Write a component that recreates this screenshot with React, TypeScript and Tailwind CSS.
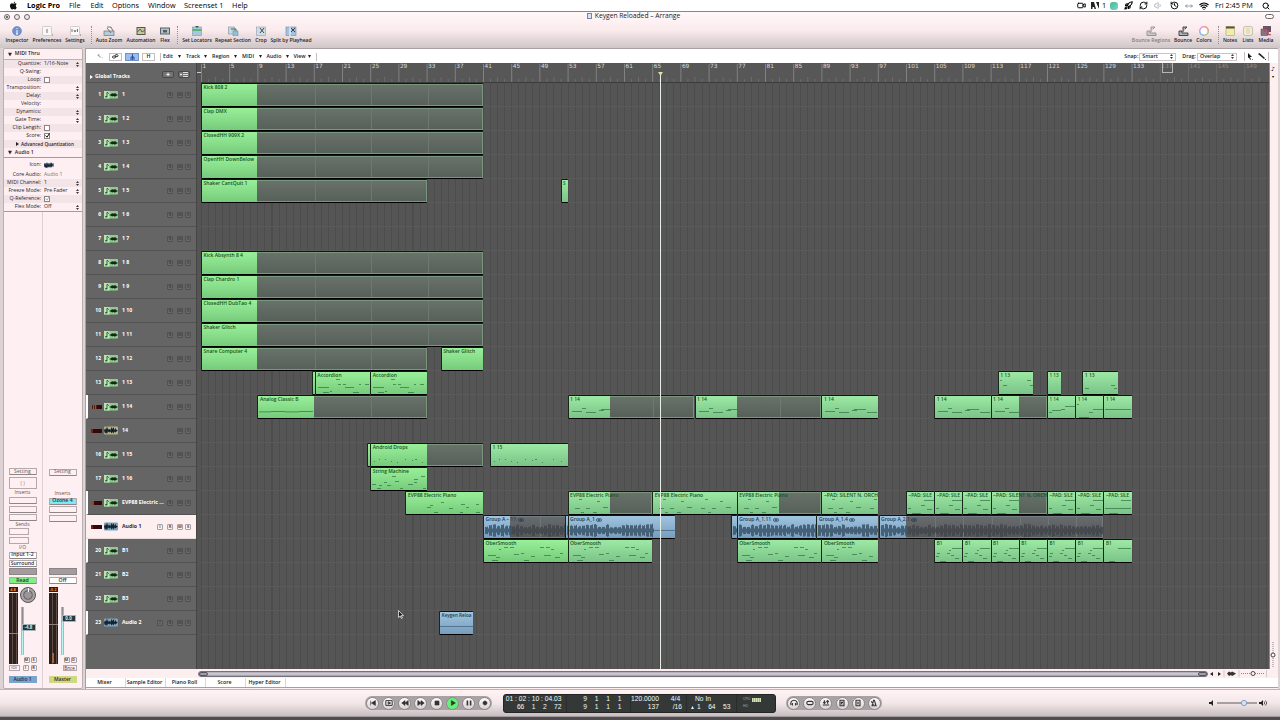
import type { ReactNode } from "react";
import {
  Search,
  Wifi,
  History,
  RefreshCw,
  Volume1,
  Video,
  Rocket,
  MoveHorizontal,
} from "lucide-react";

const BAR = 7.05;
const TRACK_H = 24;

type Note = [number, number, number];

type Region = {
  from: number;
  to: number;
  loop?: number;
  name?: string;
  audio?: boolean;
  stereo?: boolean;
  notes?: Note[];
  waveTo?: number;
};

type Track = {
  n?: number;
  name: string;
  kind?: "midi" | "audio" | "bus";
  meter?: "low" | "mid" | "high";
  edge?: boolean;
  selected?: boolean;
  regions?: Region[];
};

const accordion: Note[] = [[20, 7, 4], [22, 12, 3], [27, 12, 3], [2, 15, 11], [29, 15, 9], [43, 12, 2], [49, 12, 4], [7, 20, 6], [37, 20, 6], [14, 19, 2]];
const oct: Note[] = [[20, 7, 4], [26, 7, 4], [15, 9, 2], [4, 15, 8], [30, 14, 5], [37, 13, 3], [12, 17, 4], [47, 16, 4], [8, 20, 6], [40, 20, 5], [56, 7, 4], [62, 7, 4], [67, 9, 3], [60, 15, 7], [71, 17, 5], [76, 13, 3]];
const drops: Note[] = [[3, 17, 1], [8, 15, 1], [14, 15, 1], [20, 17, 1], [26, 18, 1], [34, 15, 1], [41, 16, 1], [44, 15, 2], [51, 18, 1], [62, 15, 1], [70, 17, 1]];
const strings: Note[] = [[21, 8, 4], [50, 8, 4], [43, 11, 4], [13, 14, 3], [24, 13, 4], [1, 16, 4], [8, 17, 3], [16, 17, 4], [37, 16, 5], [43, 14, 3], [6, 20, 4], [29, 20, 3], [52, 20, 3]];
const piano: Note[] = [[35, 10, 3], [24, 13, 3], [55, 12, 4], [70, 12, 3], [21, 15, 4], [43, 16, 4], [60, 15, 3], [28, 20, 4], [54, 20, 3], [70, 20, 4]];
const evp: Note[] = [[10, 7, 3], [28, 9, 3], [6, 16, 5], [17, 16, 4], [34, 15, 5], [12, 20, 3], [24, 20, 4], [52, 7, 3], [67, 9, 3], [48, 16, 4], [59, 16, 4], [73, 15, 5], [55, 20, 3]];
const lead: Note[] = [[3, 15, 10], [13, 12, 4], [17, 16, 10], [30, 14, 5], [32, 13, 12], [45, 16, 10]];
const pad: Note[] = [[17, 8, 10], [14, 13, 4], [1, 16, 3], [20, 17, 5], [5, 21, 9]];
const b1: Note[] = [[17, 8, 10], [14, 10, 2], [2, 13, 3], [12, 13, 3], [16, 15, 3], [1, 16, 3], [20, 18, 4], [5, 21, 6]];
const sparse: Note[] = [[1, 8, 2], [4, 13, 4], [28, 8, 4], [31, 13, 4]];
const line: Note[] = [[1, 15.5, 12], [13, 15, 14], [27, 15.5, 14], [41, 15, 14]];
const flat: Note[] = [[1, 13, 26]];
const rise: Note[] = [[1, 16, 3], [4, 14, 9], [13, 13, 4], [17, 10, 10]];

const eight = { from: 1, to: 9, loop: 41 };
const PAD_LONG = "~PAD: SILENT N. ORCH";
const PAD_SHORT = "~PAD: SILE";

const TRACKS: Track[] = [
  { n: 1, name: "1", regions: [{ ...eight, name: "Kick 808 2" }] },
  { n: 2, name: "1 2", regions: [{ ...eight, name: "Clap DMX" }] },
  { n: 3, name: "1 3", regions: [{ ...eight, name: "ClosedHH 909X 2" }] },
  { n: 4, name: "1 4", regions: [{ ...eight, name: "OpenHH DownBelow" }] },
  {
    n: 5,
    name: "1 5",
    regions: [
      { ...eight, loop: 33, name: "Shaker CantQuit 1" },
      { from: 52, to: 53, name: "S" },
    ],
  },
  { n: 6, name: "1 6" },
  { n: 7, name: "1 7" },
  { n: 8, name: "1 8", regions: [{ ...eight, name: "Kick Absynth 8 4" }] },
  { n: 9, name: "1 9", regions: [{ ...eight, name: "Clap Chardro 1" }] },
  { n: 10, name: "1 10", regions: [{ ...eight, name: "ClosedHH DubTao 4" }] },
  { n: 11, name: "1 11", regions: [{ ...eight, name: "Shaker Glitch" }] },
  {
    n: 12,
    name: "1 12",
    regions: [
      { ...eight, loop: 33, name: "Snare Computer 4" },
      { from: 35, to: 41, name: "Shaker Glitch" },
    ],
  },
  {
    n: 13,
    name: "1 13",
    regions: [
      { from: 16.75, to: 17.15 },
      { from: 17.15, to: 25, name: "Accordion", notes: accordion },
      { from: 25, to: 33, name: "Accordion", notes: accordion },
      { from: 114, to: 119, name: "1 13", notes: sparse },
      { from: 121, to: 123, name: "1 13" },
      { from: 126, to: 131, name: "1 13", notes: [[2, 16, 4], [28, 13, 4], [31, 16, 3]] },
    ],
  },
  {
    name: "1 14",
    meter: "high",
    edge: true,
    regions: [
      { from: 9, to: 17, loop: 33, name: "Analog Classic B", notes: line },
      { from: 53, to: 59, loop: 71, name: "1 14", notes: lead },
      { from: 71, to: 77, loop: 89, name: "1 14", notes: lead },
      { from: 89, to: 97, name: "1 14", notes: lead },
      { from: 105, to: 113, name: "1 14", notes: lead },
      { from: 113, to: 117, loop: 121, name: "1 14", notes: lead },
      { from: 121, to: 125, name: "1 14", notes: rise },
      { from: 125, to: 129, name: "1 14", notes: [[1, 8, 2], [3, 21, 10], [13, 16, 4], [17, 13, 10]] },
      { from: 129, to: 133, name: "1 14", notes: flat },
    ],
  },
  { name: "14", kind: "bus", meter: "low" },
  {
    n: 16,
    name: "1 15",
    regions: [
      { from: 24.5, to: 25 },
      { from: 25, to: 33, loop: 41, name: "Android Drops", notes: drops },
      { from: 42, to: 53, name: "1 15", notes: drops },
    ],
  },
  { n: 17, name: "1 16", regions: [{ from: 25, to: 33, name: "String Machine", notes: strings }] },
  {
    name: "EVP88 Electric ...",
    meter: "mid",
    edge: true,
    regions: [
      { from: 30, to: 41, name: "EVP88 Electric Piano", notes: piano },
      { from: 53, to: 59, loop: 65, name: "EVP88 Electric Piano", notes: evp },
      { from: 65, to: 77, name: "EVP88 Electric Piano", notes: evp },
      { from: 77, to: 83, loop: 89, name: "EVP88 Electric Piano", notes: evp },
      { from: 89, to: 97, name: PAD_LONG, notes: evp },
      { from: 101, to: 105, name: PAD_SHORT, notes: pad },
      { from: 105, to: 109, name: PAD_SHORT, notes: pad },
      { from: 109, to: 113, name: PAD_SHORT, notes: pad },
      { from: 113, to: 117, loop: 121, name: PAD_LONG, notes: pad },
      { from: 121, to: 125, name: PAD_SHORT, notes: pad },
      { from: 125, to: 129, name: PAD_SHORT, notes: pad },
      { from: 129, to: 133, name: PAD_SHORT, notes: [[17, 8, 10], [1, 16, 26], [5, 21, 9]] },
    ],
  },
  {
    name: "Audio 1",
    kind: "audio",
    meter: "low",
    selected: true,
    regions: [
      { from: 41, to: 44.9, loop: 53, name: "Group A – 11", audio: true, stereo: true },
      { from: 52.7, to: 53, audio: true },
      { from: 53, to: 68.2, name: "Group A_1", audio: true, stereo: true, waveTo: 85 },
      { from: 76.2, to: 77, audio: true },
      { from: 77, to: 88.3, name: "Group A_1.11", audio: true, stereo: true },
      { from: 88.3, to: 97.1, name: "Group A_1.4", audio: true, stereo: true },
      { from: 97.1, to: 101, loop: 129, name: "Group A_2.1", audio: true, stereo: true },
    ],
  },
  {
    n: 20,
    name: "B1",
    edge: true,
    regions: [
      { from: 41, to: 53, name: "OberSmooth", notes: oct },
      { from: 53, to: 65, name: "OberSmooth", notes: oct },
      { from: 77, to: 89, name: "OberSmooth", notes: oct },
      { from: 89, to: 97, name: "OberSmooth", notes: oct },
      { from: 105, to: 109, name: "B1", notes: b1 },
      { from: 109, to: 113, name: "B1", notes: b1 },
      { from: 113, to: 117, name: "B1", notes: b1 },
      { from: 117, to: 121, name: "B1", notes: b1 },
      { from: 121, to: 125, name: "B1", notes: b1 },
      { from: 125, to: 129, name: "B1", notes: b1 },
      { from: 129, to: 133, name: "B1", notes: [[14, 8, 13], [5, 21, 6]] },
    ],
  },
  { n: 21, name: "B2" },
  { n: 22, name: "B3" },
  {
    n: 23,
    name: "Audio 2",
    kind: "audio",
    edge: true,
    regions: [{ from: 34.8, to: 39.6, name: "Keygen Reloa", audio: true, waveTo: 0 }],
  },
];

/* ---------- regions ---------- */

const noise = (n: number) => Math.abs(Math.sin(n * 12.9898) * 43758.5453) % 1;

// short bursts, a few pixels wide, with a quieter gap between them
function wave(w: number, seed: number) {
  let d = "";
  for (let x = 1; x < w; x += 1) {
    const burst = 4 + noise(Math.floor(x / 4) + seed) * 3;
    const h = x % 4 === 0 ? 2 : burst - noise(x + seed) * 1.2;
    d += `M${x + 0.5} ${14.5 - h}V${14.5 + h}`;
  }
  return d;
}

function RegionBox({ r }: { r: Region }) {
  const w = (r.to - r.from) * BAR;
  const total = ((r.loop ?? r.to) - r.from) * BAR;
  const len = r.audio ? 4 : r.to - r.from;
  const marks: number[] = [];
  if (r.loop) for (let b = r.to + len; b < r.loop - 1; b += len) marks.push((b - r.from) * BAR);
  const green = r.from < 42 ? "from-[#99f098] to-[#76cb7c]" : "from-[#9de9a4] to-[#7ac488]";
  return (
    <div
      className="absolute top-0 h-[24px] overflow-hidden rounded-[1px] border-b border-l border-t border-b-black border-l-[#172719] border-t-[#101610]"
      style={{ left: (r.from - 1) * BAR, width: total }}
    >
      {r.loop && (
        <div
          className={`absolute inset-0 border-b border-r border-t ${
            r.audio
              ? "border-[#747d83] bg-linear-to-b from-[#686b6e] to-[#55585b]"
              : "border-[#7b967f] bg-linear-to-b from-[#68716a] to-[#566159]"
          }`}
        >
          {marks.map((m) => (
            <div key={m} className="absolute top-0 h-full w-px bg-[#6e7771]" style={{ left: m }} />
          ))}
        </div>
      )}
      <div
        className={`absolute inset-y-0 left-0 bg-linear-to-b ${r.audio ? "from-[#9fc5e0] to-[#789dbd]" : green}`}
        style={{ width: Math.max(w - 1, 1) }}
      />
      <svg className="absolute left-0 top-0 h-[22px]" width={total} height="22">
        {r.audio && r.waveTo !== 0 && (
          <>
            <path d={wave(Math.min(w, r.waveTo ?? w), r.from)} stroke="#3a5469" strokeWidth="1" opacity=".85" />
            {r.loop && (
              <path
                d={wave(total - w, 7)}
                transform={`translate(${Math.round(w)} 0)`}
                stroke="#3f4347"
                strokeWidth="1"
                opacity=".75"
              />
            )}
          </>
        )}
        {r.waveTo !== undefined && <path d={`M0 14.5H${total}`} stroke="#456680" strokeWidth=".8" />}
        {r.notes
          ?.filter(([x]) => x < w - 2)
          .map(([x, y, l], i) => (
            <rect key={i} x={x} y={y} width={Math.min(l, w - x - 1)} height=".8" fill="#2f6c40" opacity=".85" />
          ))}
      </svg>
      <div
        className={`absolute left-[1.5px] top-0 flex items-center whitespace-nowrap font-semibold leading-[7px] ${
          w < 35 && !r.loop ? "text-[4.6px]" : "text-[5px]"
        } ${r.audio ? "text-[#20384c]" : "text-[#1a5127]"}`}
      >
        {r.name}
        {r.stereo && (
          <svg className="ml-[1.5px]" width="6" height="4" viewBox="0 0 6 4" fill="none" stroke="#20384c" strokeWidth=".7">
            <circle cx="1.900" cy="2" r="1.400" />
            <circle cx="4.100" cy="2" r="1.400" />
          </svg>
        )}
      </div>
    </div>
  );
}

/* ---------- track headers ---------- */

function TrackIcon({ kind }: { kind: string }) {
  if (kind === "midi")
    return (
      <svg width="14" height="8" viewBox="0 0 14 8">
        <rect width="14" height="7.500" rx=".7" fill="#8fcb8f" />
        <rect width="5.500" height="7.500" fill="#b9e4b4" />
        <path d="M3 1.200v4.300M3 1.200l1.800 1.300" stroke="#1f4521" strokeWidth=".8" fill="none" />
        <ellipse cx="2.200" cy="5.700" rx="1.100" ry=".8" fill="#1f4521" />
        <path d="M5 4l2-.8 1-1 1.500.6 1.500-.8 1 1 2 1-2 1-1 .8-1.500-.8-1.500.6-1-.9z" fill="#142517" />
      </svg>
    );
  return (
    <svg width="14" height="9" viewBox="0 0 14 9">
      <rect y=".5" width="14" height="8" rx="1" fill={kind === "bus" ? "#b3b28b" : "#7fa2ba"} />
      <path
        d="M0 4.500l1-2 1 1 1-3 1 3 1.500-.5 1 1 1-3 1 2 1-2 1 3 1-2 1 2 1.500.5-1.500 1-1 1-1-1-1 2-1-1.500-1 1.500-1-2-1 1-1.500-1-1 2.500-1-1.500-1 1z"
        fill="#142431"
      />
    </svg>
  );
}

function TinyButton({ children, light }: { children?: ReactNode; light?: boolean }) {
  return (
    <div
      className={`flex h-[6px] w-[6px] items-center justify-center rounded-[1px] border text-[4px] font-bold leading-none ${
        light ? "border-[#a9a0a2] text-[#55494c]" : "border-[#505050] bg-[#696969] text-[#424242]"
      }`}
    >
      {children}
    </div>
  );
}

const METERS = {
  low: "w-[2px] bg-[#76201c]",
  mid: "w-[3px] bg-[#9a4524]",
  high: "w-[6px] bg-[repeating-linear-gradient(90deg,#a4502c_0_1px,#54200f_1px_2px)]",
};

function TrackHeader({ t }: { t: Track }) {
  const kind = t.kind ?? "midi";
  return (
    <div
      className={`flex h-[24px] shrink-0 items-center border-b pr-[5px] ${
        t.selected ? "border-[#e8d8da] bg-[#fdeef0] text-[#332c2e]" : "border-[#535353] bg-[#656565] text-white"
      } ${t.edge ? "border-l-2 border-l-white pl-0" : "pl-[2px]"}`}
    >
      <div className="flex w-[16px] shrink-0 justify-end pr-[3px] text-[5px] font-bold">
        {t.meter ? (
          <div className="mr-[-1px] flex h-[4px] w-[11px] bg-[#34090b]">
            <div className={METERS[t.meter]} />
          </div>
        ) : (
          t.n
        )}
      </div>
      <div className="w-[18px] shrink-0">
        <TrackIcon kind={kind} />
      </div>
      <div className="grow whitespace-nowrap text-[5.200px] font-bold leading-none">{t.name}</div>
      <div className="flex shrink-0 gap-[4px]">
        {kind === "audio" && <TinyButton light={t.selected}>I</TinyButton>}
        {kind !== "bus" && <TinyButton light={t.selected}>R</TinyButton>}
        <div className="flex gap-[2px]">
          <TinyButton light={t.selected}>M</TinyButton>
          <TinyButton light={t.selected}>S</TinyButton>
        </div>
      </div>
    </div>
  );
}

/* ---------- menu bar / toolbar ---------- */

function MenuBar() {
  return (
    <div className="flex h-[11px] shrink-0 items-center bg-white text-[7.300px] leading-none text-black">
      <svg className="ml-[9px] mr-[9px]" width="9" height="9" viewBox="0 0 24 24">
        <path
          d="M16.500 1c.1 2-1.500 4.500-4 4.700C12.200 3.600 14.200 1.300 16.500 1zM20.500 17c-1 2.600-2.800 5.500-4.800 5.500-1.400 0-1.900-.9-3.600-.9s-2.300.9-3.600.9C5.500 22.500 2.500 17 2.500 12.500c0-4 2.500-6.500 5.300-6.500 1.700 0 3 1.100 4.200 1.100 1.100 0 2.700-1.200 4.800-1.100 1.500 0 3 .8 3.800 2-3.500 2-3 7.500-.1 9z"
          fill="#111"
        />
      </svg>
      <div className="w-[42px] whitespace-nowrap font-bold">Logic Pro</div>
      <div className="w-[21.500px]">File</div>
      <div className="w-[21.500px]">Edit</div>
      <div className="w-[36px]">Options</div>
      <div className="w-[36px]">Window</div>
      <div className="w-[48px] whitespace-nowrap">Screenset 1</div>
      <div>Help</div>
      <div className="ml-auto flex items-center pr-[10px]">
        <Video className="mr-[5px]" size={9} strokeWidth={2.5} />
        <svg width="8" height="7" viewBox="0 0 8 7">
          <path d="M0 7V0h3l2 7H3.500L3 5H1.500v2zM5 0h3v7z" fill="#222" />
        </svg>
        <div className="ml-[3px] w-[8px]">1</div>
        <div className="mr-[6px] size-[8px] rounded-[3px] bg-linear-to-br from-[#48b979] to-[#7bd5df]" />
        <Rocket className="mr-[6px]" size={9} strokeWidth={3} />
        <RefreshCw className="mr-[6px]" size={9} strokeWidth={2.5} />
        <Volume1 className="mr-[7px] text-gray-400" size={9} />
        <History className="mr-[6px]" size={9} strokeWidth={2.5} />
        <MoveHorizontal className="mr-[6px] text-gray-500" size={8} />
        <Wifi className="mr-[6px]" size={10} strokeWidth={3} />
        <div className="mr-[7px] w-[40px] whitespace-nowrap">Fri 2:45 PM</div>
        <Search size={8} strokeWidth={3} />
      </div>
    </div>
  );
}

const ICONS: Record<string, ReactNode> = {
  Inspector: (
    <>
      <circle cx="6" cy="5" r="4.500" fill="#7192d0" stroke="#5876b0" strokeWidth=".5" />
      <path d="M6 2v1M6 4v4M5 8h2" stroke="white" />
    </>
  ),
  Preferences: (
    <>
      <rect x="1.500" y=".5" width="9" height="9" rx="1" fill="#faf7f8" stroke="#bbb3b5" strokeWidth=".6" />
      <path d="M6 3v4M11 9h1" stroke="#777" />
    </>
  ),
  Settings: (
    <>
      <rect x="1.500" y=".5" width="9" height="9" rx="1" fill="#faf7f8" stroke="#bbb3b5" strokeWidth=".6" />
      <path d="M3 3v3M5 4l1 2 1-2M8.500 3v3M11 9h1" stroke="#555" strokeWidth=".8" fill="none" />
    </>
  ),
  "Auto Zoom": (
    <>
      <rect x="1" y="5" width="10" height="4.500" fill="#b3ccd8" stroke="#687880" strokeWidth=".7" />
      <path d="M4 1h4l2 4M4 2l4 5" stroke="#5d696e" fill="none" strokeWidth=".9" />
    </>
  ),
  Automation: (
    <>
      <rect x="2" y="1.500" width="8" height="7" fill="#c0ca9c" stroke="#55594b" />
      <path d="M2.500 6l2.500-3 2 3 3-2" stroke="#444" fill="none" strokeWidth=".8" />
    </>
  ),
  Flex: (
    <>
      <rect x="1.500" y="2" width="9" height="6" fill="#b3c4ca" stroke="#596268" />
      <rect x="4" y="4" width="4" height="2.500" fill="#565c61" />
    </>
  ),
  "Set Locators": (
    <>
      <rect x="1.500" y="1" width="9" height="8.500" fill="#a8c6dc" stroke="#7b96a6" strokeWidth=".6" />
      <path d="M1.500 4h9" stroke="#56b26b" strokeWidth="1.800" />
      <path d="M4 0l2 2 2-2z" fill="#346045" />
    </>
  ),
  "Repeat Section": (
    <>
      <rect x="1.500" y="1" width="6" height="7" fill="#c7d8df" stroke="#7e919b" strokeWidth=".6" />
      <rect x="6" y="5" width="5" height="5" fill="#91bfdd" stroke="#6794af" strokeWidth=".6" />
      <path d="M4 3h5v2" stroke="#397055" fill="none" />
    </>
  ),
  Crop: (
    <>
      <rect x="1.500" y="1" width="9" height="8.500" fill="#cfdde6" stroke="#87a0b1" strokeWidth=".6" />
      <path d="M5 2l4 5M9 2L5 7" stroke="#333" strokeWidth=".9" />
    </>
  ),
  "Split by Playhead": (
    <>
      <rect x="1" y="1" width="10" height="8.500" fill="#9fc3e0" stroke="#708ba0" strokeWidth=".6" />
      <path d="M5 1v9" stroke="white" />
      <path d="M6 2l4 4M10 2L6 6" stroke="#333" strokeWidth=".9" />
    </>
  ),
  Bounce: (
    <>
      <path d="M2 9.500V5h3v2h6v2.500zM6 6V1h4M8 3l2-2" fill="#aab3b5" stroke="#343b3d" strokeWidth=".9" />
    </>
  ),
  Colors: (
    <>
      <circle cx="6" cy="5" r="4.300" fill="white" stroke="#d68fdf" strokeWidth="1.200" />
      <path d="M6 .7a4.300 4.300 0 0 1 4.300 4.300" stroke="#f0a179" strokeWidth="1.200" fill="none" />
      <path d="M6 9.300A4.300 4.300 0 0 1 1.700 5" stroke="#72cce9" strokeWidth="1.200" fill="none" />
      <path d="M10.300 5A4.300 4.300 0 0 1 6 9.300" stroke="#a6d97b" strokeWidth="1.200" fill="none" />
    </>
  ),
  Notes: (
    <>
      <rect x="2" y=".5" width="8.500" height="9" fill="#f0ecac" stroke="#999567" strokeWidth=".5" />
      <rect x="2" y=".5" width="8.500" height="2" fill="#55503b" />
    </>
  ),
  Lists: (
    <>
      <rect x="1.500" y=".5" width="9" height="9" rx="2" fill="#f1eed6" stroke="#a1a190" strokeWidth=".6" />
      <path d="M4 3h4M4 5h4M4 7h4" stroke="#c9c789" strokeWidth=".7" />
    </>
  ),
  Media: (
    <>
      <rect x="3" y="0" width="8" height="6" fill="#64556c" />
      <rect x="1" y="3" width="7" height="6.500" fill="#8b7183" stroke="#53444f" strokeWidth=".5" />
      <path d="M8 4v4l3 1M5 1v5" stroke="#bd4252" strokeWidth="1.300" />
    </>
  ),
};

function Tool({ name, icon, width, dim }: { name: string; icon?: string; width: string; dim?: boolean }) {
  return (
    <div className={`flex shrink-0 flex-col items-center ${width} ${dim ? "opacity-50" : ""}`}>
      <svg width="12" height="10" viewBox="0 0 12 10" fill="none">
        {ICONS[icon ?? name]}
      </svg>
      <div className="mt-[1px] whitespace-nowrap text-[5px] font-semibold leading-[6px] text-[#1d191a]">{name}</div>
    </div>
  );
}

const Divider = ({ width }: { width: string }) => (
  <div className={`flex h-[18px] shrink-0 justify-center ${width}`}>
    <div className="border-l border-dotted border-[#938b8d]" />
  </div>
);

function Toolbar() {
  return (
    <div className="h-[37px] shrink-0 border-t border-[#8b8688] bg-linear-to-b from-[#fff8f9] via-[#fbebed] to-[#cfc6c8]">
      <div className="flex h-[9px] items-center pl-[4px] pr-[6px]">
        <div className="flex w-[40px] gap-[4px]">
          {[0, 1, 2].map((i) => (
            <div key={i} className="flex size-[6px] items-center justify-center rounded-full border border-[#6c6668] bg-[#eee6e8]">
              {i === 0 && <div className="size-[2px] rounded-full bg-[#444]" />}
            </div>
          ))}
        </div>
        <div className="flex grow items-center justify-center gap-[3px] pr-[21px] text-[6.700px] leading-none text-[#222]">
          <div className="h-[6px] w-[5px] border border-[#7484a3] bg-[#dbe4f5]" />
          Keygen Reloaded – Arrange
        </div>
        <div className="w-[30px]">
          <div className="ml-auto h-[5px] w-[9px] rounded-full border border-[#666]" />
        </div>
      </div>
      <div className="flex pl-[2px] pr-[7px] pt-[5px]">
        <Tool name="Inspector" width="w-[30px]" />
        <Tool name="Preferences" width="w-[30px]" />
        <Tool name="Settings" width="w-[26px]" />
        <Divider width="w-[6px]" />
        <Tool name="Auto Zoom" width="w-[30px]" />
        <Tool name="Automation" width="w-[34px]" />
        <Tool name="Flex" width="w-[14px]" />
        <Divider width="w-[10px]" />
        <Tool name="Set Locators" width="w-[30px]" />
        <Tool name="Repeat Section" width="w-[42px]" />
        <Tool name="Crop" width="w-[14px]" />
        <Tool name="Split by Playhead" width="w-[46px]" />
        <div className="grow" />
        <Tool name="Bounce Regions" icon="Bounce" width="w-[40px]" dim />
        <Tool name="Bounce" width="w-[24px]" />
        <Tool name="Colors" width="w-[18px]" />
        <Divider width="w-[10px]" />
        <Tool name="Notes" width="w-[14px]" />
        <Tool name="Lists" width="w-[22px]" />
        <Tool name="Media" width="w-[14px]" />
      </div>
    </div>
  );
}

/* ---------- inspector ---------- */

function Stepper() {
  return (
    <svg width="3" height="5" viewBox="0 0 3 5">
      <path d="M0 2l1.500-2L3 2zM0 3l1.500 2L3 3z" fill="#3c3638" />
    </svg>
  );
}

type Param = { label: string; value?: string; check?: "on" | "off" | "dim"; step?: boolean; muted?: boolean };

const MIDI_PARAMS: Param[] = [
  { label: "Quantize:", value: "1/16-Note", step: true },
  { label: "Q-Swing:" },
  { label: "Loop:", check: "off" },
  { label: "Transposition:", step: true },
  { label: "Delay:", step: true },
  { label: "Velocity:" },
  { label: "Dynamics:", step: true },
  { label: "Gate Time:", step: true },
  { label: "Clip Length:", check: "off" },
  { label: "Score:", check: "on" },
];

const TRACK_PARAMS: Param[] = [
  { label: "Core Audio:", value: "Audio 1", muted: true },
  { label: "MIDI Channel:", value: "1", step: true },
  { label: "Freeze Mode:", value: "Pre Fader", step: true },
  { label: "Q-Reference:", check: "dim" },
  { label: "Flex Mode:", value: "Off", step: true },
];

function ParamRow({ p, shade }: { p: Param; shade: boolean }) {
  return (
    <div className={`flex h-[8px] items-center pr-[3px] ${shade ? "bg-[#f3e5e7]" : ""}`}>
      <div className="flex w-[37px] shrink-0 justify-end whitespace-nowrap">{p.label}</div>
      <div className={`ml-[3px] grow whitespace-nowrap ${p.muted ? "text-[#777]" : ""}`}>
        {p.value}
        {p.check && (
          <div className="relative size-[5.500px] border border-[#8c8486] bg-white">
            {p.check !== "off" && (
              <svg className="absolute -top-px left-0 size-[5px]" viewBox="0 0 5 5">
                <path d="M.5 2.500L2 4.200 4.500.3" stroke={p.check === "on" ? "#111" : "#aaa"} fill="none" />
              </svg>
            )}
          </div>
        )}
      </div>
      {p.step && <Stepper />}
    </div>
  );
}

function Slot({ children, className = "" }: { children?: ReactNode; className?: string }) {
  return (
    <div
      className={`flex h-[7px] w-[28px] shrink-0 items-center justify-center whitespace-nowrap rounded-[1px] border border-[#b3a9ab] border-b-[#8e8587] text-[5.200px] leading-none ${className}`}
    >
      {children}
    </div>
  );
}

function Strip({ master }: { master?: boolean }) {
  return (
    <div className="flex w-[28px] flex-col text-[5px] leading-none text-[#332c2e]">
      <Slot className="text-[#665d5f]">Setting</Slot>
      {master ? (
        <div className="h-[14px]" />
      ) : (
        <div className="mt-[2px] flex h-[12px] items-center justify-center border border-[#b3a9ab] text-[#857b7d]">( )</div>
      )}
      <div className="h-[7px] pt-[1px] text-center text-[#5c5456]">Inserts</div>
      <div className="mt-[1px] flex flex-col gap-[1.500px]">
        {master ? <Slot className="border-[#63b9c5] bg-[#7beaf5] font-semibold">Ozone 4</Slot> : <Slot />}
        <Slot />
        <Slot />
      </div>
      {master ? (
        <div className="h-[45.500px]" />
      ) : (
        <>
          <div className="h-[7px] pt-[1px] text-center text-[#5c5456]">Sends</div>
          <div className="flex flex-col gap-[1.500px]">
            <div className="h-[7px] w-[20px] border border-[#b3a9ab]" />
            <div className="h-[7px] w-[20px] border border-[#b3a9ab]" />
          </div>
          <div className="h-[8px] pt-[1px] text-center text-[#5c5456]">I/O</div>
          <div className="flex flex-col gap-[1.500px]">
            <Slot className="bg-white font-semibold">Input 1-2</Slot>
            <Slot className="bg-white font-semibold">Surround</Slot>
          </div>
        </>
      )}
      <div className="mt-[1px] h-[7px] border border-[#8c8587] bg-[#a39b9d]" />
      <Slot className={`mt-[2px] font-semibold ${master ? "bg-white" : "border-[#5db464] bg-[#7fee85]"}`}>{master ? "Off" : "Read"}</Slot>
      <div className="mt-[3px] flex h-[84px] gap-[2px]">
        <div className="flex h-[77px] w-[9px] shrink-0 flex-col">
          <div className="flex h-[5px] items-center justify-center bg-[#3c1a0b] text-[4px] font-bold text-[#e98f36]">
            {master ? "-0.2" : "4.8"}
          </div>
          <div className="mt-[1px] grow bg-[repeating-linear-gradient(90deg,#2c201d_0_3px,#5d4e48_3px_4px)]">
            <div className={`${master ? "mt-[31px]" : "mt-[40px]"} h-px bg-[#8d8077]`} />
            {master && <div className="ml-[3px] mt-[28px] h-[10px] w-[2px] bg-[#a2683d]" />}
          </div>
        </div>
        <div className="relative flex grow flex-col">
          {master ? (
            <div className="h-[20px]" />
          ) : (
            <div className="flex h-[20px] justify-center">
              <div className="flex size-[16px] justify-center rounded-full border border-[#575355] bg-[radial-gradient(circle,#9c9698_35%,#5e5a5c_40%,#aaa4a6_55%)]">
                <div className="h-[4px] w-px bg-white" />
              </div>
            </div>
          )}
          <div className="ml-[1px] h-[48px] w-[3px] border-x border-[#aab9bd] bg-[#b6f3f3]">
            <div className={`${master ? "h-[12px]" : "h-[20px]"} bg-[#90898b]`} />
          </div>
          <div
            className={`absolute left-[2px] flex h-[7px] w-[14px] items-center justify-center border border-[#a8b6b9] bg-[#1f3b41] text-[4.500px] font-bold text-[#cceef2] ${
              master ? "top-[28px]" : "top-[37px]"
            }`}
          >
            {master ? "0.0" : "-4.8"}
          </div>
          <div className="mt-[2px] flex justify-end gap-[1px]">
            <TinyButton light>M</TinyButton>
            <TinyButton light>{master ? "D" : "S"}</TinyButton>
          </div>
        </div>
      </div>
      <div className="mt-[-6px] flex h-[6px] justify-end gap-[2px]">
        {master ? (
          <div className="flex h-[6px] w-[14px] items-center justify-center border border-[#b3a9ab] text-[4.500px]">Bnce</div>
        ) : (
          <>
            <div className="mr-auto flex h-[6px] w-[11px] items-center justify-center border border-[#b3a9ab] text-[4px]">(O)</div>
            <TinyButton light>I</TinyButton>
            <TinyButton light>R</TinyButton>
          </>
        )}
      </div>
      <div className={`mt-[5px] flex h-[7px] items-center justify-center text-[5px] font-semibold ${master ? "bg-[#cfd883]" : "bg-[#79a4cb]"}`}>
        {master ? "Master" : "Audio 1"}
      </div>
    </div>
  );
}

function Inspector() {
  return (
    <div className="flex w-[80px] shrink-0 flex-col overflow-hidden rounded-[2px] border border-[#b9b0b2] bg-[#feeff2] text-[5.200px] font-medium leading-none text-[#2a2425]">
      <div className="flex h-[11px] shrink-0 items-center border-b border-[#bdb1b3] pl-[4px] font-semibold">
        <span className="mr-[3px] text-[5px]">▼</span>MIDI Thru
      </div>
      {MIDI_PARAMS.map((p, i) => (
        <ParamRow key={p.label} p={p} shade={i % 2 === 0} />
      ))}
      <div className="flex h-[8px] items-center whitespace-nowrap bg-[#f3e5e7] pl-[12px] text-[4.700px] font-semibold">
        <svg className="mr-[2px]" width="3" height="4" viewBox="0 0 3 4">
          <path d="M0 0l3 2-3 2z" fill="#222" />
        </svg>
        Advanced Quantization
      </div>
      <div className="flex h-[10px] items-center border-b border-[#a59b9d] pl-[4px] font-semibold">
        <span className="mr-[3px] text-[5px]">▼</span>Audio 1
      </div>
      <div className="flex h-[13px] items-center">
        <div className="w-[37px] text-right">Icon:</div>
        <svg className="ml-[3px]" width="10" height="6" viewBox="0 0 10 6">
          <rect y="1" width="10" height="4" fill="#8aa4b8" />
          <path d="M0 3l1-2 1 2 1-3 1 3 1-2 1 2 1-3 1 2 2 1-2 1-1 2-1-2-1 2-1-2-1 3-1-2-1 1z" fill="#172632" />
        </svg>
      </div>
      {TRACK_PARAMS.map((p, i) => (
        <ParamRow key={p.label} p={p} shade={i % 2 === 1} />
      ))}
      <div className="flex grow border-t border-[#a59b9d]">
        <div className="flex w-[39px] items-end justify-center border-r border-[#ddd0d2] pb-[5px] pr-px">
          <Strip />
        </div>
        <div className="flex w-[39px] items-end justify-center pb-[5px]">
          <Strip master />
        </div>
      </div>
    </div>
  );
}

/* ---------- arrange ---------- */

function ArrangeBar() {
  const menus = [
    ["Edit", "w-[23px]"],
    ["Track", "w-[26px]"],
    ["Region", "w-[30px]"],
    ["MIDI", "w-[24.500px]"],
    ["Audio", "w-[27px]"],
    ["View", "w-[22px]"],
  ];
  return (
    <div className="flex h-[14px] shrink-0 items-center rounded-t-[2px] bg-white pt-px text-[5.300px] font-semibold leading-none text-[#262022]">
      <div className="w-[23px] pl-[11px] text-[#888]">↖.</div>
      <div className="flex h-[8px] w-[13px] items-center justify-center border border-[#c6bdbf]">
        <svg width="7" height="5" viewBox="0 0 7 5" fill="none" stroke="#333" strokeWidth="1">
          <rect x=".5" y="2" width="3" height="2" rx="1" />
          <rect x="3" y=".7" width="3" height="2" rx="1" />
        </svg>
      </div>
      <div className="ml-[3px] flex h-[8px] w-[14px] items-center justify-center border border-[#6f92c9] bg-[#9bbef2]">
        <svg width="5" height="6" viewBox="0 0 5 6">
          <path d="M2.500 0v6M1 3h3M1 3v3M4 3v3" stroke="#123e87" strokeWidth=".8" />
        </svg>
      </div>
      <div className="ml-[3px] flex h-[8px] w-[13px] items-center justify-center border border-[#c6bdbf]">H</div>
      <div className="ml-[5px] flex h-[8px] items-center border-x border-[#c6bdbf] pl-[2px]">
        {menus.map(([m, w]) => (
          <div key={m} className={`flex items-center justify-between pr-[5px] ${w}`}>
            {m}
            <svg width="3" height="3" viewBox="0 0 3 3">
              <path d="M0 0h3L1.500 3z" fill="#222" />
            </svg>
          </div>
        ))}
      </div>
      <div className="ml-auto mr-[1px]">Snap:</div>
      <div className="mr-[6px] flex h-[8px] w-[37px] items-center justify-between border border-[#cdc3c5] px-[2px]">
        Smart <Stepper />
      </div>
      <div className="mr-[1px]">Drag:</div>
      <div className="mr-[7px] flex h-[8px] w-[40px] items-center justify-between border border-[#cdc3c5] px-[2px]">
        Overlap <Stepper />
      </div>
      <div className="mr-[9px] flex h-[9px] w-[25px] items-center justify-around border-x border-[#c6bdbf]">
        <svg width="6" height="7" viewBox="0 0 6 7">
          <path d="M1 0l4 4H3l1 2.500-1 .3-1-2.500-1 1zM5.500 6h.5v1h-.5z" fill="#111" />
        </svg>
        <svg width="8" height="7" viewBox="0 0 8 7">
          <path d="M0 1l1.500-1L7 5 6 6zM7 6h1v1H7z" fill="#222" />
        </svg>
      </div>
    </div>
  );
}

function Ruler() {
  const marks = Array.from({ length: 38 }, (_, i) => 1 + i * 4);
  return (
    <div className="relative h-[20px] shrink-0 overflow-hidden border-b border-[#3c3c3c] bg-[#575757]">
      <svg className="absolute inset-0" width="1068" height="20">
        {Array.from({ length: 151 }, (_, i) => (
          <path
            key={i}
            d={`M${i * BAR + 0.5} ${i % 4 === 0 ? 1 : i % 2 === 0 ? 14 : 16}V19`}
            stroke={i % 4 === 0 ? (i >= 136 ? "#6c6c6c" : "#8c8c8c") : "#727272"}
            strokeWidth=".8"
          />
        ))}
      </svg>
      {marks.map((m) => (
        <div
          key={m}
          className={`absolute top-0 font-['DejaVu_Sans'] text-[5.800px] leading-[6px] ${m >= 137 ? "text-[#8a8a8a]" : "text-[#d8d8d8]"}`}
          style={{ left: (m - 1) * BAR + 1.5 }}
        >
          {m}
        </div>
      ))}
      <div className="absolute left-[961px] top-0 h-[10px] w-[11px] border border-t-0 border-[#b5b5b5]" />
    </div>
  );
}

function Arrange() {
  return (
    <div className="flex min-w-0 grow flex-col border-l border-t border-[#a8a0a2] bg-[#fdeef0]">
      <ArrangeBar />
      <div className="flex h-[606px] shrink-0">
        <div className="flex w-[110px] shrink-0 flex-col bg-[#656565]">
          <div className="flex h-[20px] shrink-0 items-center border-b border-[#535353] pl-[4px] pr-[6px] text-[5.200px] font-bold text-white">
            <svg className="mt-[8px]" width="3" height="4" viewBox="0 0 3 4">
              <path d="M0 0l3 2-3 2z" fill="white" />
            </svg>
            <div className="ml-[2px] mt-[8px] grow whitespace-nowrap leading-none">Global Tracks</div>
            <div className="mr-[4px] mt-[4px] flex h-[7px] w-[12px] items-center justify-center rounded-[2px] border border-[#484848] bg-[#747474] text-[7px] leading-none">+</div>
            <div className="mt-[4px] flex h-[7px] w-[12px] items-center justify-center rounded-[2px] border border-[#484848] bg-[#747474]">
              <svg width="8" height="5" viewBox="0 0 8 5">
                <path d="M0 2.500h2M1 1.500v2" stroke="white" strokeWidth=".7" />
                <path d="M3 .5h5M3 2.500h5M3 4.500h5" stroke="#ddd" />
              </svg>
            </div>
          </div>
          {TRACKS.map((t, i) => (
            <TrackHeader key={i} t={t} />
          ))}
        </div>
        <div className="w-[5px] shrink-0 border-l border-[#454545] bg-[#545454]">
          <div className="mt-[9px] h-px bg-[#ccc]" />
        </div>
        <div className="relative flex w-[1068px] shrink-0 flex-col overflow-hidden bg-[#555]">
          <Ruler />
          <div className="grow bg-[repeating-linear-gradient(90deg,#4c4c4c_0_1px,#555_1px_7.05px)]">
            {TRACKS.map((t, i) => (
              <div key={i} className="relative border-b border-[#5a5a5a]" style={{ height: TRACK_H }}>
                {t.regions?.map((r, j) => (
                  <RegionBox key={j} r={r} />
                ))}
              </div>
            ))}
          </div>
          {/* playhead */}
          <div className="absolute bottom-0 left-[459px] top-[11px] w-px bg-[#e8eee8]" />
          <svg className="absolute left-[457px] top-[9px]" width="5" height="4" viewBox="0 0 6 5">
            <path d="M0 0h6L3 5z" fill="#e2dfae" />
          </svg>
          <svg className="absolute left-[197px] top-[547px]" width="6" height="9" viewBox="0 0 6 9">
            <path d="M.5.500v7l1.700-1.500 1.200 2.500 1-.5-1.200-2.400H5.500z" fill="#222" stroke="white" strokeWidth=".7" />
          </svg>
        </div>
        <div className="flex grow flex-col items-center border-l border-[#888] bg-[#fdeef0] pr-[2px] text-[6px] leading-none">
          <div className="mt-[3px]">♪</div>
          <div className="mt-[3px] text-[4px]">▾</div>
          <svg className="mb-[1px] mt-auto" width="6" height="26" viewBox="0 0 6 26">
            <path d="M3 0v26" stroke="#8d8385" strokeDasharray="1 1" />
            <circle cx="3" cy="13" r="2" fill="white" stroke="#444" />
          </svg>
        </div>
      </div>
      <div className="flex h-[9px] shrink-0 items-center">
        <div className="w-[112px]" />
        <div className="flex h-[6px] w-[1010px] items-center justify-between rounded-full border border-[#74717b] bg-linear-to-b from-[#aaa7b1] via-[#d4d1dc] to-[#9997a1]">
          <div className="h-full w-[9px] rounded-full border border-[#55535b] bg-[#a19eaa]" />
          <div className="h-full w-[9px] rounded-full border border-[#55535b] bg-[#a19eaa]" />
        </div>
        <svg className="ml-[2px]" width="12" height="4" viewBox="0 0 12 4">
          <path d="M3 0v4L0 2zM8 0v4l3-2z" fill="#222" />
        </svg>
        <svg className="ml-[1px]" width="46" height="7" viewBox="0 0 46 7">
          <path d="M1 0v7M16 0v7M43.500 0v7" stroke="#c1b6b8" strokeWidth=".7" />
          <path d="M4 3.500l2-2 2 1 1-1 2 1 2 1-2 1.500-2 1-1-1-2 1z" fill="#333" />
          <path d="M18 3.500h24" stroke="#8d8385" strokeDasharray="1 1" />
          <circle cx="30" cy="3.500" r="2" fill="white" stroke="#444" />
        </svg>
      </div>
      <div className="flex h-[10px] shrink-0 items-center border-b border-[#a69ea0] bg-white text-[5.300px] font-semibold leading-none text-[#1c1819]">
        {["Mixer", "Sample Editor", "Piano Roll", "Score", "Hyper Editor"].map((t) => (
          <div key={t} className="flex h-full w-[40px] items-center justify-center whitespace-nowrap border-r border-[#ded5d7] pr-[2px]">
            {t}
          </div>
        ))}
      </div>
    </div>
  );
}

/* ---------- transport ---------- */

const TRANSPORT = [
  "M2 2v6M8 2v6L3 5z",
  "M1 2h8v6H1zM4 3.500v3L7 5z",
  "M5 2v6L1 5zM9 2v6L5 5z",
  "M1 2v6l4-3zM5 2v6l4-3z",
  "M2.500 2.500h5v5h-5z",
  "M3 2v6l5-3z",
  "M3 2v6M7 2v6",
  "M5 2.500a2.500 2.500 0 1 0 .01 0z",
];

const MODES = [
  "M1.500 7.500a4 4 0 1 1 7 0M3 8V5M7 8V5",
  "M3 3h4a2 2 0 0 1 0 4H3a2 2 0 0 1 0-4z",
  "M1 7.500h8M3 1.500v4M1.500 4L3 5.500 4.500 4M7 6V2M5.500 3.500L7 2l1.500 1.500",
  "M2.500 1.500h5v7h-5zM4 3.500l2 3M6 3.500l-2 3",
  "M2.500 1.500h5v7h-5zM4 4h2M4 6h2",
  "M2.500 8.500l2-7h1l2 7zM5 7L1.500 3",
];

function Round({ d, weight, active, filled }: { d: string; weight: number; active?: boolean; filled?: boolean }) {
  return (
    <div
      className={`flex size-[13px] items-center justify-center rounded-full border border-[#8f898b] ${
        active ? "bg-[#68f17a]" : "bg-linear-to-b from-[#fffafa] to-[#d9d1d3]"
      }`}
    >
      <svg width="8" height="8" viewBox="0 0 10 10">
        <path d={d} fill={filled ? "#333" : "none"} stroke="#333" strokeWidth={weight} />
      </svg>
    </div>
  );
}

function Lcd({ top, bottom, width }: { top: ReactNode; bottom: ReactNode; width: string }) {
  return (
    <div className={`flex shrink-0 flex-col justify-center whitespace-pre text-right leading-[8px] ${width}`}>
      <div>{top}</div>
      <div>{bottom}</div>
    </div>
  );
}

function Transport() {
  return (
    <div className="flex h-[27px] shrink-0 items-center border-t border-[#bdb5b7] bg-linear-to-b from-[#fff3f4] via-[#f4e7e9] to-[#c7bec0]">
      <div className="ml-[365px] flex h-[14px] w-[127px] items-center justify-between rounded-full bg-[#a9a2a4] px-px">
        {TRANSPORT.map((d, i) => (
          <Round key={i} d={d} active={i === 5} filled={i !== 1} weight={i === 6 ? 2 : i === 1 ? 1.2 : 0.8} />
        ))}
      </div>
      <div className="ml-[11px] flex h-[19px] w-[273px] rounded-[3px] border border-[#222524] bg-[#343938] font-['Liberation_Sans'] text-[6.700px] text-[#f2faf7]">
        <Lcd width="w-[57.500px]" top="01 : 02 : 10 : 04.03" bottom="66    1    2    72" />
        <div className="ml-[4px] h-full w-px bg-[#282c2b]" />
        <div className="ml-[9px] grid w-[46px] grid-cols-4 content-center text-right leading-[8px]">
          <span>9</span><span>1</span><span>1</span><span>1</span>
          <span>9</span><span>1</span><span>1</span><span>1</span>
        </div>
        <div className="ml-[8px] h-full w-px bg-[#282c2b]" />
        <Lcd width="w-[28.500px]" top="120.0000" bottom="137" />
        <Lcd width="w-[23px]" top="4/4 " bottom="/16" />
        <div className="ml-[4px] h-full w-px bg-[#282c2b]" />
        <div className="ml-[4px] flex w-[45px] flex-col justify-center whitespace-pre leading-[8px]">
          <div className="pl-[4px]">No In</div>
          <div className="flex items-center">
            <svg className="mr-[3px]" width="3" height="3" viewBox="0 0 3 3">
              <path d="M0 3h3L1.500 0z" fill="#e7f1ee" />
            </svg>
            1    64    53
          </div>
        </div>
        <div className="h-full w-px bg-[#282c2b]" />
        <div className="ml-[6px] flex flex-col justify-center gap-[2px] text-[3.500px] leading-[5px] text-[#9fa9a6]">
          <div className="flex items-center gap-[2px]">
            CPU <div className="h-[4px] w-[9px] bg-[repeating-linear-gradient(90deg,#cfe0b7_0_1px,#a3b18f_1px_2px)]" />
          </div>
          <div>HD</div>
        </div>
      </div>
      <div className="ml-[10px] flex h-[14px] w-[96px] items-center justify-between rounded-full bg-[#a9a2a4] px-px">
        {MODES.map((d) => (
          <Round key={d} d={d} weight={1.4} />
        ))}
      </div>
      <svg className="ml-auto mr-[12px]" width="60" height="8" viewBox="0 0 60 8">
        <path d="M1 3h2l2-2v6L3 5H1zM51 3h2l2-2v6l-2-2h-2z" fill="#222" />
        <path d="M56 2.500q1.500 1.500 0 3M57.500 1.500q2.500 2.500 0 5" stroke="#222" strokeWidth=".7" fill="none" />
        <path d="M9 4h40" stroke="#5e585a" />
        <circle cx="36" cy="4" r="2.700" fill="#d2e2f8" stroke="#6d86ae" strokeWidth=".7" />
      </svg>
    </div>
  );
}

export default function App() {
  return (
    <div className="flex h-[720px] w-[1280px] flex-col overflow-hidden bg-[#4e4c4e] font-['Open_Sans','DejaVu_Sans',sans-serif]">
      <MenuBar />
      <Toolbar />
      <div className="flex h-[641px] shrink-0 bg-[#ddd3d5] pl-[3px] pr-[2px]">
        <Inspector />
        <div className="w-[2px] shrink-0" />
        <Arrange />
      </div>
      <Transport />
      <div className="h-px shrink-0 bg-[#a39b9e]" />
    </div>
  );
}
